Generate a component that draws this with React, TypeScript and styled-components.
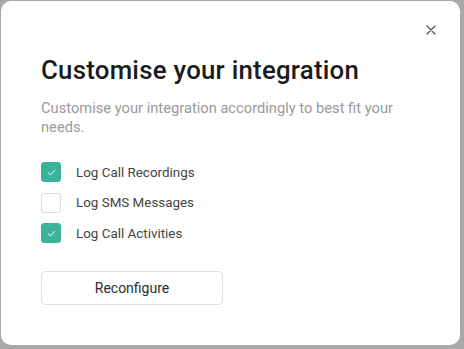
import React, { useState } from 'react'
import styled, { createGlobalStyle } from 'styled-components'

const GlobalStyle = createGlobalStyle`
  html, body {
    margin: 0;
    padding: 0;
    background: #a9a9a9;
    font-family: Roboto, 'Liberation Sans', Arial, sans-serif;
  }
`

const Backdrop = styled.div`
  width: 464px;
  height: 349px;
  padding: 1px;
  box-sizing: border-box;
  overflow: hidden;
`

const Modal = styled.div`
  position: relative;
  width: 459px;
  height: 344px;
  background: #ffffff;
  border-radius: 10px;
  box-sizing: border-box;
  padding: 53px 40px 0 40px;
  display: flex;
  flex-direction: column;
`

const CloseButton = styled.button`
  position: absolute;
  top: 19px;
  right: 19px;
  width: 20px;
  height: 20px;
  padding: 0;
  border: none;
  background: transparent;
  display: flex;
  align-items: center;
  justify-content: center;
  cursor: pointer;
`

const Title = styled.h2`
  margin: 0;
  font-family: Roboto, Inter, sans-serif;
  font-size: 25.8px;
  font-weight: 500;
  line-height: 32px;
  color: #1b1b1b;
  letter-spacing: 0.25px;
`

const Subtitle = styled.p`
  margin: 13px 0 0 0;
  font-size: 14.7px;
  line-height: 19px;
  color: #9a9a9a;
`

const OptionList = styled.div`
  display: flex;
  flex-direction: column;
  gap: 10.5px;
  margin-top: 25px;
`

const Option = styled.label`
  display: flex;
  align-items: center;
  gap: 15px;
  font-size: 13.4px;
  color: #444444;
  cursor: pointer;
`

const Box = styled.span<{ $checked: boolean }>`
  width: 20px;
  height: 20px;
  box-sizing: border-box;
  border-radius: 3px;
  display: flex;
  align-items: center;
  justify-content: center;
  background: ${({ $checked }) => ($checked ? '#3bb39c' : '#ffffff')};
  border: 1px solid ${({ $checked }) => ($checked ? '#3bb39c' : '#dcdcdc')};
`

const ActionButton = styled.button`
  margin-top: 28px;
  width: 182px;
  height: 34px;
  background: #ffffff;
  border: 1px solid #dedede;
  border-radius: 4px;
  font-family: Roboto, 'Liberation Sans', sans-serif;
  font-size: 14px;
  color: #2e2e2e;
  cursor: pointer;
`

const options = [
  { id: 'rec', label: 'Log Call Recordings', checked: true },
  { id: 'sms', label: 'Log SMS Messages', checked: false },
  { id: 'act', label: 'Log Call Activities', checked: true },
]

export default function App() {
  const [state, setState] = useState(options)

  const toggle = (id: string) =>
    setState((s) => s.map((o) => (o.id === id ? { ...o, checked: !o.checked } : o)))

  return (
    <>
      <GlobalStyle />
      <Backdrop>
        <Modal>
          <CloseButton aria-label="Close">
            <svg width="10" height="10" viewBox="0 0 10 10">
              <path d="M1 1L9 9M9 1L1 9" stroke="#555" strokeWidth="1.3" strokeLinecap="round" />
            </svg>
          </CloseButton>
          <Title>Customise your integration</Title>
          <Subtitle>
            Customise your integration accordingly to best fit your needs.
          </Subtitle>
          <OptionList>
            {state.map((o) => (
              <Option key={o.id} onClick={() => toggle(o.id)}>
                <Box $checked={o.checked}>
                  {o.checked && (
                    <svg width="9" height="7" viewBox="0 0 9 7">
                      <path d="M1 3.6L3.3 5.8L8 1.2" fill="none" stroke="#bfe8df" strokeWidth="1.1" />
                    </svg>
                  )}
                </Box>
                {o.label}
              </Option>
            ))}
          </OptionList>
          <ActionButton>Reconfigure</ActionButton>
        </Modal>
      </Backdrop>
    </>
  )
}
